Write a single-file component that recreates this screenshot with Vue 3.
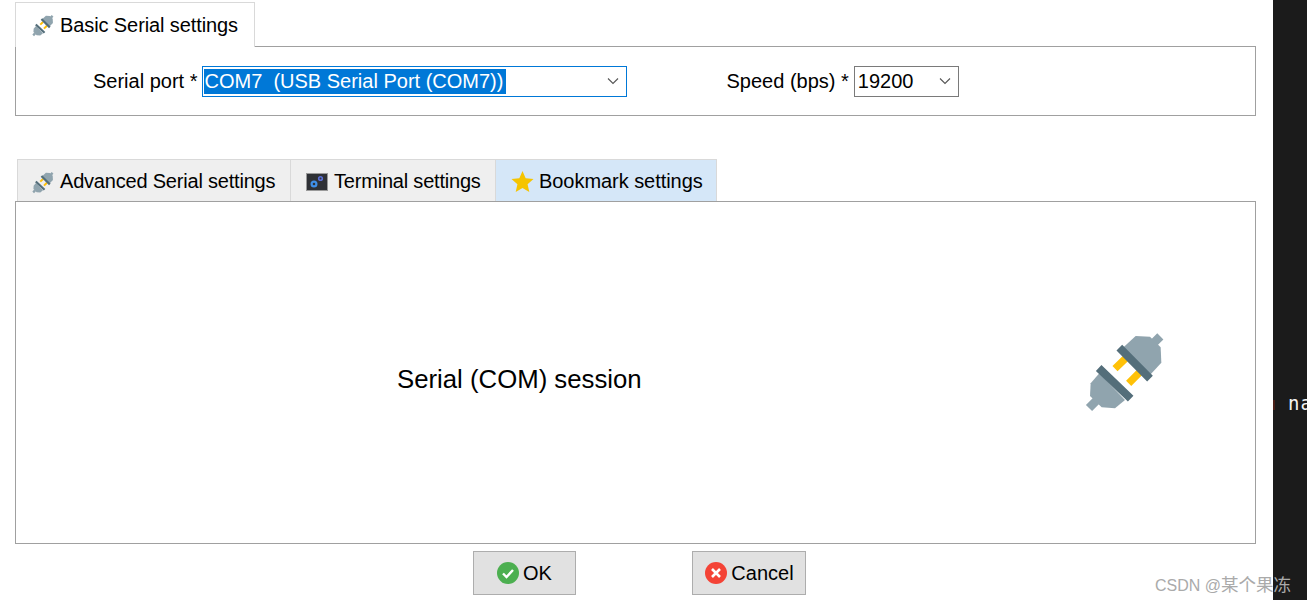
<template>
  <div class="page">
    <svg class="defs" width="0" height="0">
      <symbol id="plug" viewBox="0 0 330 300">
        <path d="M158 84 L197 48 L240 50 L272 82 L274 128 L240 165 Z" fill="#90a4ae" />
        <path d="M62 190 L88 160 L165 240 L135 265 L95 262 L60 228 Z" fill="#90a4ae" />
        <path d="M248 72 L271 49 M78 243 L57 264" stroke="#90a4ae" stroke-width="26" fill="none" />
        <path d="M135 146 L166 116 M176 190 L208 158" stroke="#ffc107" stroke-width="22" fill="none" />
        <path d="M148 83 L240 176 M86 144 L182 236" stroke="#546e7a" stroke-width="24" fill="none" />
      </symbol>
    </svg>

    <main class="dialog">
      <div class="tab tab-active">
        <svg class="tab-icon"><use href="#plug" /></svg>
        <span>Basic Serial settings</span>
      </div>
      <section class="basic-panel">
        <label class="field-label">Serial port *</label>
        <div class="select select-focus">
          <span class="selected-text">{{ portName }}</span>
          <svg class="chevron" viewBox="0 0 12 8"><path d="M1 1.5 L6 6.5 L11 1.5" /></svg>
        </div>
        <label class="field-label speed-label">Speed (bps) *</label>
        <div class="select select-speed">
          <span>19200</span>
          <svg class="chevron" viewBox="0 0 12 8"><path d="M1 1.5 L6 6.5 L11 1.5" /></svg>
        </div>
      </section>

      <nav class="tabs">
        <div class="tab tab-adv">
          <svg class="tab-icon"><use href="#plug" /></svg>
          <span>Advanced Serial settings</span>
        </div>
        <div class="tab tab-term">
          <svg class="term-icon" viewBox="0 0 22 18">
            <rect x="0.5" y="0.5" width="21" height="17" fill="#2f3136" stroke="#9a9a9a" />
            <circle cx="8" cy="11" r="2.4" fill="none" stroke="#3f8fe8" stroke-width="2.2" />
            <circle cx="14.5" cy="5.5" r="1.8" fill="none" stroke="#5a6fd8" stroke-width="1.6" />
          </svg>
          <span>Terminal settings</span>
        </div>
        <div class="tab tab-mark">
          <svg class="star" viewBox="0 0 24 24">
            <path d="M12 1 L15.3 8.6 L23.5 9.4 L17.3 14.9 L19.1 23 L12 18.8 L4.9 23 L6.7 14.9 L0.5 9.4 L8.7 8.6 Z" fill="#f5c400" />
          </svg>
          <span>Bookmark settings</span>
        </div>
      </nav>
      <section class="session-panel">
        <span class="session-title">Serial (COM) session</span>
        <svg class="session-icon"><use href="#plug" /></svg>
      </section>

      <footer class="actions">
        <button class="btn btn-ok">
          <svg class="btn-icon" viewBox="0 0 22 22">
            <circle cx="11" cy="11" r="11" fill="#4caf50" />
            <path d="M6 11.5 L9.5 15 L16 8" fill="none" stroke="#fff" stroke-width="2.4" />
          </svg>
          <span>OK</span>
        </button>
        <button class="btn btn-cancel">
          <svg class="btn-icon" viewBox="0 0 22 22">
            <circle cx="11" cy="11" r="11" fill="#f44336" />
            <path d="M7 7 L15 15 M15 7 L7 15" fill="none" stroke="#fff" stroke-width="2.6" />
          </svg>
          <span>Cancel</span>
        </button>
      </footer>
    </main>

    <aside class="strip"><i class="sliver"></i><span>na</span></aside>
    <div class="watermark">CSDN @<span class="wm-cjk">某个果冻</span></div>
  </div>
</template>

<script setup>
// two spaces on purpose, the template compiler would squash them
const portName = 'COM7  (USB Serial Port (COM7))'
</script>

<style scoped>
.page {
  position: relative;
  display: flex;
  width: 1307px;
  height: 600px;
  overflow: hidden;
  background: #fff;
  color: #000;
  font-family: "Liberation Sans", Arial, sans-serif;
  font-size: 20px;
}
.defs {
  position: absolute;
}
.dialog {
  width: 1241px;
  margin-left: 15px;
  margin-right: 17px;
  padding-top: 2px;
  flex: none;
}
.tab {
  display: flex;
  align-items: center;
  box-sizing: border-box;
  height: 42px;
  border: 1px solid #d9d9d9;
  border-bottom: none;
  white-space: nowrap;
}
.tab-icon {
  width: 30px;
  height: 28px;
  flex: none;
}
.tab-active {
  position: relative;
  z-index: 1;
  width: 240px;
  height: 45px;
  margin-bottom: -1px;
  padding-left: 12px;
  background: #fff;
  letter-spacing: -0.1px;
}
.tab-active .tab-icon {
  margin-right: 2px;
}
.basic-panel {
  display: flex;
  align-items: center;
  box-sizing: border-box;
  height: 70px;
  padding-left: 77px;
  border: 1px solid #a0a0a0;
}
.field-label {
  margin-right: 4px;
}
.speed-label {
  margin-left: 100px;
  margin-right: 5px;
}
.select {
  display: flex;
  align-items: center;
  justify-content: space-between;
  box-sizing: border-box;
  height: 31px;
  padding-right: 7px;
  background: #fff;
}
.select-focus {
  width: 425px;
  padding-left: 1px;
  border: 1px solid #0078d7;
}
.select-speed {
  width: 105px;
  padding-left: 3px;
  border: 1px solid #7a7a7a;
}
.selected-text {
  width: 302px;
  height: 25px;
  padding-left: 1px;
  box-sizing: border-box;
  line-height: 25px;
  white-space: pre;
  background: #0078d7;
  color: #fff;
}
.chevron {
  width: 12px;
  height: 8px;
  fill: none;
  stroke: #555;
  stroke-width: 1.1;
}
.tabs {
  display: flex;
  margin-top: 43px;
  margin-left: 2px;
}
.tabs .tab {
  padding-top: 2px;
  background: #efefef;
}
.tabs .tab-icon {
  margin-right: 2px;
}
.tab-adv {
  width: 274px;
  padding-left: 10px;
  letter-spacing: -0.2px;
}
.tab-term {
  width: 205px;
  padding-left: 15px;
  border-left: none;
  letter-spacing: -0.2px;
}
.term-icon {
  width: 22px;
  height: 18px;
  margin-right: 6px;
}
.tabs .tab-mark {
  width: 221px;
  padding-left: 15px;
  background: #d5e7f8;
  border-left: none;
  letter-spacing: -0.05px;
}
.star {
  width: 23px;
  height: 23px;
  margin-right: 5px;
}
.session-panel {
  display: flex;
  align-items: center;
  box-sizing: border-box;
  height: 343px;
  padding-left: 381px;
  border: 1px solid #a0a0a0;
}
.session-title {
  margin-top: 13px;
  font-size: 25.75px;
}
.session-icon {
  width: 110px;
  height: 100px;
  margin-left: auto;
  margin-right: 75px;
  margin-bottom: 5px;
}
.actions {
  display: flex;
  gap: 116px;
  margin-top: 7px;
  padding-left: 458px;
}
.btn {
  display: flex;
  align-items: center;
  justify-content: center;
  gap: 4px;
  box-sizing: border-box;
  height: 44px;
  padding: 0;
  background: #e1e1e1;
  border: 1px solid #adadad;
  font: inherit;
  color: #000;
}
.btn-ok {
  width: 103px;
}
.btn-cancel {
  width: 114px;
  padding-left: 1px;
}
.btn-icon {
  width: 22px;
  height: 22px;
}
.strip {
  position: relative;
  flex: none;
  width: 34px;
  box-sizing: border-box;
  padding: 392px 0 0 15px;
  background: #1b1b1b;
  color: #f4f4f4;
  font-family: "DejaVu Sans Mono", monospace;
  font-size: 19px;
  letter-spacing: 1px;
  overflow: hidden;
  white-space: nowrap;
}
.sliver {
  position: absolute;
  left: 0;
  top: 400px;
  width: 2px;
  height: 10px;
  background: #4a2018;
}
.watermark {
  position: absolute;
  left: 1155px;
  top: 571px;
  color: #aaa;
  font-family: "Liberation Sans", "Noto Sans CJK SC", sans-serif;
  font-size: 16px;
  white-space: nowrap;
}
.wm-cjk {
  font-size: 17.5px;
}
</style>
